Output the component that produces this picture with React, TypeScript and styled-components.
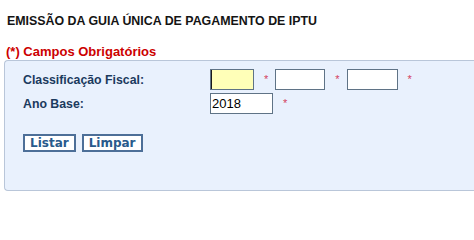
import React from "react";
import styled, { createGlobalStyle } from "styled-components";

const Global = createGlobalStyle`
  html, body { margin: 0; padding: 0; background: #ffffff; }
  body { font-family: "Liberation Sans", Arial, sans-serif; }
`;

const Page = styled.div`
  padding: 13px 0 0 4px;
  width: 474px;
  box-sizing: border-box;
`;

const Title = styled.h1`
  margin: 0 0 15px 3px;
  font-size: 12.4px;
  line-height: 16px;
  font-weight: bold;
  color: #141414;
`;

const Required = styled.div`
  margin: 0 0 0 2px;
  font-size: 13px;
  line-height: 16px;
  font-weight: bold;
  color: #cc0000;
`;

const Panel = styled.div`
  background: #e9f1fd;
  border: 1px solid #b9c6d9;
  border-right: none;
  border-radius: 4px 0 0 4px;
  padding: 8px 0 0 18px;
  height: 131px;
  box-sizing: border-box;
`;

const FormGrid = styled.div`
  display: grid;
  grid-template-columns: 187px 1fr;
  row-gap: 3px;
  align-items: center;
`;

const Label = styled.label`
  font-size: 12.3px;
  font-weight: bold;
  color: #1b3a5e;
`;

const Fields = styled.div`
  display: flex;
  align-items: center;
`;

const TextInput = styled.input<{ $w: number; $focus?: boolean }>`
  width: ${(p) => p.$w}px;
  height: 21px;
  box-sizing: border-box;
  border: 1px solid #5f7386;
  background: ${(p) => (p.$focus ? "#ffffb8" : "#ffffff")};
  box-shadow: ${(p) => (p.$focus ? "inset 1px 0 0 #1a1a1a" : "none")};
  font-family: "Liberation Sans", Arial, sans-serif;
  font-size: 13px;
  color: #000;
  padding: 0 1px;
  margin: 0;
  outline: none;
`;

const Star = styled.span`
  font-size: 11px;
  color: #d4405e;
  margin: 0 7px 0 10px;
  line-height: 11px;
`;

const Buttons = styled.div`
  display: flex;
  gap: 6px;
  margin-top: 20px;
`;

const Button = styled.button`
  height: 18px;
  box-sizing: border-box;
  border: 2px solid #4d6f98;
  background: #ffffff;
  color: #285a8c;
  font-family: "DejaVu Sans", Verdana, sans-serif;
  font-weight: bold;
  font-size: 12px;
  line-height: 14px;
  padding: 0 5px;
  margin: 0;
  display: flex;
  align-items: center;
`;

export default function App() {
  return (
    <>
      <Global />
      <Page>
        <Title>EMISSÃO DA GUIA ÚNICA DE PAGAMENTO DE IPTU</Title>
        <Required>(*) Campos Obrigatórios</Required>
        <Panel>
          <FormGrid>
            <Label>Classificação Fiscal:</Label>
            <Fields>
              <TextInput $w={44} $focus />
              <Star>*</Star>
              <TextInput $w={50} />
              <Star>*</Star>
              <TextInput $w={51} />
              <Star>*</Star>
            </Fields>
            <Label>Ano Base:</Label>
            <Fields>
              <TextInput $w={63} defaultValue="2018" />
              <Star>*</Star>
            </Fields>
          </FormGrid>
          <Buttons>
            <Button>Listar</Button>
            <Button>Limpar</Button>
          </Buttons>
        </Panel>
      </Page>
    </>
  );
}
